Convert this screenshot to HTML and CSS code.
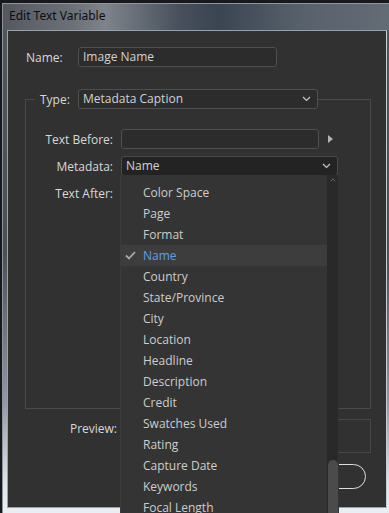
FILE: index.html
```html
<!DOCTYPE html>
<html>
<head>
<meta charset="utf-8">
<title>Edit Text Variable</title>
<link rel="stylesheet" href="styles.css">
</head>
<body>
<div class="window">
  <div class="titlebar">Edit Text Variable</div>
  <div class="frame">
    <div class="client">
      <div class="name-row">
        <span class="lbl name-lbl">Name:</span>
        <div class="input name-input">Image Name</div>
      </div>
      <fieldset class="group">
        <legend class="type-row">
          <span class="lbl type-lbl">Type:</span>
          <div class="select type-select">
            <span>Metadata Caption</span>
            <svg class="chev" width="9" height="6" viewBox="0 0 9 6"><polyline points="1,1 4.5,4.5 8,1" fill="none" stroke="#c8c8c8" stroke-width="1.2"/></svg>
          </div>
        </legend>
        <div class="fields">
          <span class="lbl flbl">Text Before:</span>
          <div class="input"></div>
          <svg class="arrow" width="7" height="10" viewBox="0 0 7 10"><polygon points="1,1 6,5 1,9" fill="#b4b4b4"/></svg>
          <span class="lbl flbl">Metadata:</span>
          <div class="select meta-select">
            <span>Name</span>
            <svg class="chev" width="9" height="6" viewBox="0 0 9 6"><polyline points="1,1 4.5,4.5 8,1" fill="none" stroke="#c8c8c8" stroke-width="1.2"/></svg>
          </div>
          <span class="lbl flbl">Text After:</span>
          <div class="input"></div>
          <span></span>
        </div>
      </fieldset>
      <div class="preview-row">
        <span class="lbl preview-lbl">Preview:</span>
        <div class="preview-box"></div>
      </div>
      <div class="buttons">
        <button class="btn">Cancel</button>
        <button class="btn">OK</button>
      </div>

      <div class="popup">
        <ul class="items">
          <li class="item"><span></span>Color Space</li>
          <li class="item"><span></span>Page</li>
          <li class="item"><span></span>Format</li>
          <li class="item selected"><svg class="check" width="11" height="9" viewBox="0 0 11 9"><polyline points="1,4.5 4,7.5 10,1" fill="none" stroke="#a8a8a8" stroke-width="1.8"/></svg>Name</li>
          <li class="item"><span></span>Country</li>
          <li class="item"><span></span>State/Province</li>
          <li class="item"><span></span>City</li>
          <li class="item"><span></span>Location</li>
          <li class="item"><span></span>Headline</li>
          <li class="item"><span></span>Description</li>
          <li class="item"><span></span>Credit</li>
          <li class="item"><span></span>Swatches Used</li>
          <li class="item"><span></span>Rating</li>
          <li class="item"><span></span>Capture Date</li>
          <li class="item"><span></span>Keywords</li>
          <li class="item"><span></span>Focal Length</li>
        </ul>
        <div class="scrollbar">
          <svg class="up" width="8" height="5" viewBox="0 0 8 5"><polyline points="1,4.5 4,1 7,4.5" fill="none" stroke="#6e6e6e" stroke-width="1.1"/></svg>
          <div class="thumb"></div>
        </div>
      </div>
    </div>
  </div>
</div>
</body>
</html>
```

FILE: styles.css
```css
html, body {
  margin: 0;
  padding: 0;
  overflow: hidden;
  background: #17191d;
  width: 389px;
  height: 513px;
}

body {
  font-family: "Open Sans", "Noto Sans", sans-serif;
  font-size: 12px;
}

.window {
  margin: 3px 0 0 2px;
  width: 392px;
  height: 520px;
  border-left: 1px solid #8e949b;
  border-top: 1px solid #8e949b;
  display: flex;
  flex-direction: column;
}

.titlebar {
  height: 26px;
  line-height: 24px;
  padding-left: 6px;
  color: #0d0d0d;
  font-family: "Noto Sans", "Open Sans", sans-serif;
  font-size: 12px;
  background: linear-gradient(90deg, #55595f 0%, #6c7178 18%, #7f848b 26%, #47505c 45%, #3a4552 55%, #56606b 75%, #646c76 100%);
}

.frame {
  flex: 1;
  padding: 0 0 0 4px;
  background: linear-gradient(180deg, #50565d 0%, #4a5058 45%, #8f98a2 75%, #dfe6ee 92%, #eef2f6 100%);
}

.client {
  position: relative;
  width: 378px;
  height: 476px;
  border: 1px solid #9aa1a9;
  border-right-color: #c9ced4;
  background: #313131;
  color: #d6d6d6;
}

.lbl {
  color: #d8d8d8;
  white-space: nowrap;
}

.input, .select {
  box-sizing: border-box;
  height: 20px;
  border: 1px solid #4f4f4f;
  border-radius: 3px;
  background: #2c2c2c;
  color: #d2d2d2;
  padding: 0 4px;
  line-height: 18px;
  display: flex;
  align-items: center;
}

.select {
  justify-content: space-between;
  padding-right: 6px;
}

.chev {
  flex: none;
}

.name-row {
  display: flex;
  align-items: center;
  margin-top: 16px;
  padding-left: 18px;
}

.name-lbl {
  width: 52px;
}

.name-input {
  width: 199px;
}

.group {
  box-sizing: border-box;
  margin: 22px 0 0 17px;
  padding: 0;
  width: 346px;
  height: 320px;
  border: 1px solid #4a4a4a;
  min-width: 0;
}

.type-row {
  display: flex;
  align-items: center;
  margin-left: 9px;
  padding: 0 0 0 5px;
}

.type-lbl {
  width: 38px;
}

.type-select {
  width: 240px;
}

.fields {
  display: grid;
  grid-template-columns: 87px 198px 11px;
  grid-auto-rows: 20px;
  column-gap: 8px;
  row-gap: 7px;
  margin-top: 20px;
  align-items: center;
}

.flbl {
  text-align: right;
}

.arrow {
  justify-self: start;
}

.meta-select {
  grid-column: span 2;
  background: #232323;
  border-color: #4a4a4a;
}

.preview-row {
  display: flex;
  align-items: flex-start;
  margin: 10px 0 0 18px;
  gap: 6px;
}

.preview-lbl {
  width: 91px;
  text-align: right;
  line-height: 20px;
}

.preview-box {
  box-sizing: border-box;
  width: 248px;
  height: 34px;
  border: 1px solid #474747;
}

.buttons {
  display: flex;
  justify-content: flex-end;
  gap: 10px;
  margin-top: 11px;
  padding-right: 20px;
}

.btn {
  box-sizing: border-box;
  height: 25px;
  width: 80px;
  border: 1.5px solid #dcdcdc;
  border-radius: 13px;
  background: transparent;
  color: #e0e0e0;
  font-family: inherit;
  font-size: 12px;
}

.popup {
  position: absolute;
  left: 112px;
  top: 144px;
  width: 218px;
  height: 345px;
  display: flex;
  background: #343434;
  border-left: 1px solid #3b3b3b;
}

.items {
  list-style: none;
  margin: 0;
  padding: 7px 0 0 0;
  width: 206px;
}

.item {
  display: grid;
  grid-template-columns: 22px 1fr;
  align-items: center;
  height: 21px;
  line-height: 21px;
  color: #cdcdcd;
  white-space: nowrap;
}

.item.selected {
  background: #3d3d3d;
  color: #5aa1e8;
}

.check {
  margin-left: 4px;
}

.scrollbar {
  width: 11px;
  background: #292929;
  display: flex;
  flex-direction: column;
  align-items: center;
}

.up {
  margin-top: 3px;
}

.thumb {
  margin-top: 278px;
  width: 10px;
  height: 80px;
  border-radius: 5px 5px 0 0;
  background: #4b4b4b;
}
```
